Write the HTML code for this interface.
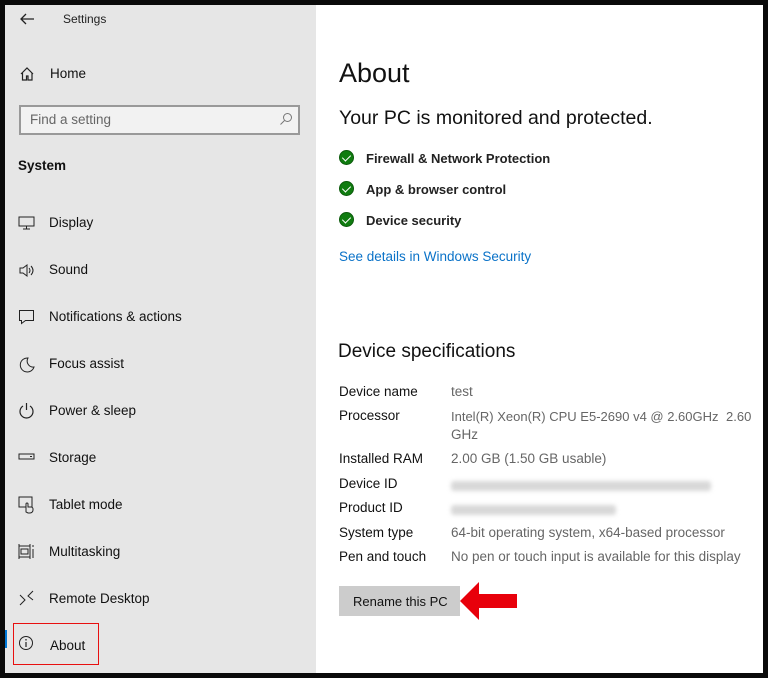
<!DOCTYPE html>
<html><head><style>
*{margin:0;padding:0;box-sizing:border-box}
body{width:768px;height:678px;background:#0a0a0a;position:relative;overflow:hidden;font-family:"Liberation Sans",sans-serif;color:#000}
#side{position:absolute;left:5px;top:5px;width:311px;height:668px;background:#e6e6e6}
#main{position:absolute;left:316px;top:5px;width:447px;height:668px;background:#fff;overflow:hidden}
.a{position:absolute;white-space:nowrap}
.nav{font-size:13.5px;color:#111}
.ic{position:absolute}
.lbl{font-size:13.5px;color:#111}
.val{font-size:13.5px;color:#666}
.chk{position:absolute;width:15px;height:15px;border-radius:50%;background:#107c10;border:1px solid #0b5a0b}
.chk:after{content:"";position:absolute;left:4px;top:2px;width:4px;height:7px;border:solid #fff;border-width:0 1.6px 1.6px 0;transform:rotate(45deg)}
.blur{position:absolute;height:10px;background:#d8d8d8;filter:blur(2px);border-radius:3px}
</style></head><body>
<div id="side">
<svg class="ic" style="left:14px;top:7px" width="16" height="14"><path d="M15 7H2M7 2L2 7l5 5" stroke="#222" stroke-width="1.3" fill="none"/></svg>
<div class="a" style="left:58px;top:7px;font-size:12px;color:#222">Settings</div>
<svg class="ic" style="left:14px;top:61px" width="16" height="16"><path d="M2 8L8 2l6 6M3.5 7v7h4v-4h1.5v4h4V7" stroke="#222" stroke-width="1.2" fill="none"/></svg>
<div class="a nav" style="left:45px;top:61px">Home</div>
<div class="a" style="left:14px;top:100px;width:281px;height:30px;border:2px solid #999;background:#f2f2f2"></div>
<div class="a" style="left:25px;top:107px;font-size:13.5px;color:#666">Find a setting</div>
<svg class="ic" style="left:274px;top:107px" width="14" height="14"><circle cx="8.5" cy="5.5" r="4" stroke="#777" fill="none"/><path d="M5.5 8.5L1.5 12.5" stroke="#777"/></svg>
<div class="a" style="left:13px;top:153px;font-size:13.5px;font-weight:bold;color:#111">System</div>

<svg class="ic" style="left:13px;top:211px" width="18" height="15"><rect x="1" y="1" width="15" height="9" stroke="#222" fill="none"/><path d="M8.5 10v3M5 13h7" stroke="#222"/></svg>
<div class="a nav" style="left:44px;top:210px">Display</div>
<svg class="ic" style="left:13px;top:258px" width="18" height="15"><path d="M2 5h3l4-3v11l-4-3H2z" stroke="#222" fill="none"/><path d="M11 5q2 2.5 0 5M13 3q4 4.5 0 9" stroke="#222" fill="none"/></svg>
<div class="a nav" style="left:44px;top:257px">Sound</div>
<svg class="ic" style="left:13px;top:304px" width="18" height="17"><path d="M1.5 1.5h14v10h-8l-4 3v-3h-2z" stroke="#222" fill="none"/></svg>
<div class="a nav" style="left:44px;top:304px">Notifications &amp; actions</div>
<svg class="ic" style="left:13px;top:351px" width="18" height="17"><path d="M10 2a7 7 0 1 0 6 9a6 6 0 0 1-6-9z" stroke="#222" fill="none"/></svg>
<div class="a nav" style="left:44px;top:351px">Focus assist</div>
<svg class="ic" style="left:13px;top:397px" width="18" height="17"><path d="M5 4a6.5 6.5 0 1 0 7 0M8.5 1v7" stroke="#222" stroke-width="1.2" fill="none"/></svg>
<div class="a nav" style="left:44px;top:398px">Power &amp; sleep</div>
<svg class="ic" style="left:13px;top:446px" width="18" height="12"><rect x="1" y="3" width="15" height="5" stroke="#222" fill="none"/><path d="M12 5.5h2" stroke="#222"/></svg>
<div class="a nav" style="left:44px;top:445px">Storage</div>
<svg class="ic" style="left:13px;top:491px" width="18" height="18"><rect x="1" y="1" width="13" height="10" stroke="#222" fill="none"/><path d="M8 16V8a1 1 0 0 1 2 0v3h3a2 2 0 0 1 2 2v1a3 3 0 0 1-3 3h-2z" stroke="#222" fill="#e6e6e6"/></svg>
<div class="a nav" style="left:44px;top:492px">Tablet mode</div>
<svg class="ic" style="left:13px;top:538px" width="18" height="17"><path d="M1 1v15M12 1v15M1 3h11M1 14h11M3 6h7v5H3zM15 2v2M15 6v9" stroke="#222" fill="none"/></svg>
<div class="a nav" style="left:44px;top:539px">Multitasking</div>
<svg class="ic" style="left:13px;top:585px" width="18" height="17"><path d="M2 5l5 5-5 5M15 1l-5 5 5 4" stroke="#222" fill="none"/></svg>
<div class="a nav" style="left:44px;top:586px">Remote Desktop</div>
<div class="a" style="left:0;top:625px;width:2px;height:18px;background:#0078d7"></div>
<div class="a" style="left:8px;top:618px;width:86px;height:42px;border:1.5px solid #e81010"></div>
<svg class="ic" style="left:13px;top:630px" width="17" height="17"><circle cx="8" cy="8" r="6.5" stroke="#222" fill="none"/><path d="M8 7v5" stroke="#222" stroke-width="1.2"/><circle cx="8" cy="4.8" r=".8" fill="#222"/></svg>
<div class="a nav" style="left:45px;top:633px">About</div>
</div>

<div id="main">
<div class="a" style="left:23px;top:53px;font-size:27px;color:#111">About</div>
<div class="a" style="left:23px;top:102px;font-size:19.5px;color:#111">Your PC is monitored and protected.</div>
<div class="chk" style="left:23px;top:145px"></div>
<div class="a" style="left:50px;top:146px;font-size:13px;font-weight:bold;color:#222">Firewall &amp; Network Protection</div>
<div class="chk" style="left:23px;top:176px"></div>
<div class="a" style="left:50px;top:177px;font-size:13px;font-weight:bold;color:#222">App &amp; browser control</div>
<div class="chk" style="left:23px;top:207px"></div>
<div class="a" style="left:50px;top:208px;font-size:13px;font-weight:bold;color:#222">Device security</div>
<div class="a" style="left:23px;top:244px;font-size:13.5px;color:#0a72c8">See details in Windows Security</div>
<div class="a" style="left:22px;top:336px;font-size:19px;color:#111">Device specifications</div>

<div class="a lbl" style="left:23px;top:379px">Device name</div><div class="a val" style="left:135px;top:379px">test</div>
<div class="a lbl" style="left:23px;top:403px">Processor</div><div class="a val" style="left:135px;top:404px;font-size:13px">Intel(R) Xeon(R) CPU E5-2690 v4 @ 2.60GHz</div>
<div class="a val" style="left:410px;top:404px;font-size:13px">2.60</div>
<div class="a val" style="left:135px;top:422px">GHz</div>
<div class="a lbl" style="left:23px;top:446px">Installed RAM</div><div class="a val" style="left:135px;top:446px">2.00 GB (1.50 GB usable)</div>
<div class="a lbl" style="left:23px;top:471px">Device ID</div><div class="blur" style="left:135px;top:476px;width:260px"></div>
<div class="a lbl" style="left:23px;top:495px">Product ID</div><div class="blur" style="left:135px;top:500px;width:165px"></div>
<div class="a lbl" style="left:23px;top:520px">System type</div><div class="a val" style="left:135px;top:520px">64-bit operating system, x64-based processor</div>
<div class="a lbl" style="left:23px;top:544px">Pen and touch</div><div class="a val" style="left:135px;top:544px">No pen or touch input is available for this display</div>
<div class="a" style="left:23px;top:581px;width:121px;height:30px;background:#ccc"></div>
<div class="a" style="left:37px;top:589px;font-size:13px;color:#111">Rename this PC</div>
<svg class="ic" style="left:142px;top:572px" width="60" height="50"><path d="M2 24L21 5v12h38v14H21v12z" fill="#e8000b"/></svg>
</div>
</body></html>
